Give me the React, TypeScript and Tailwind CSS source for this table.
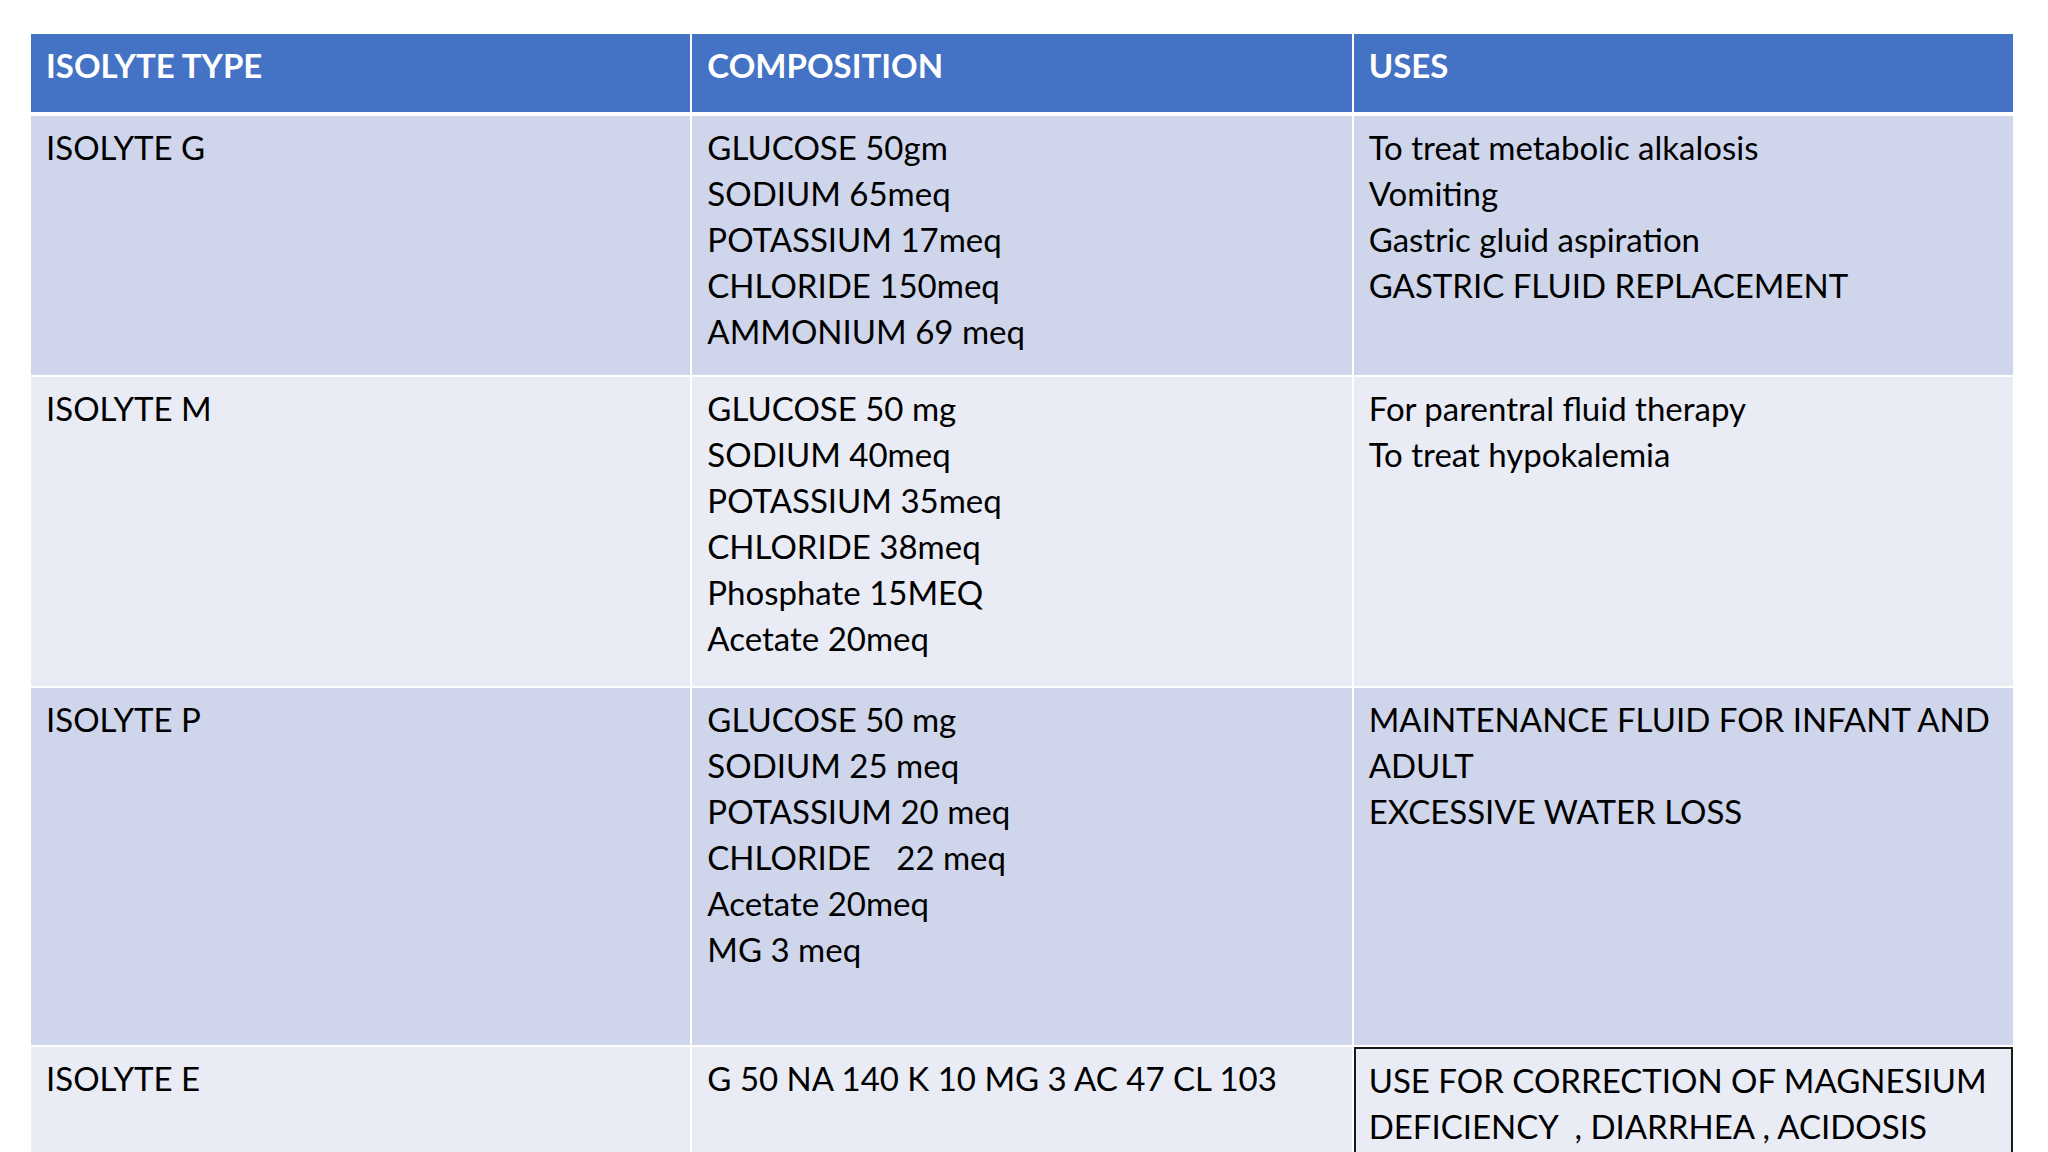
const rows = [
  {
    type: "ISOLYTE G",
    composition: ["GLUCOSE 50gm", "SODIUM 65meq", "POTASSIUM 17meq", "CHLORIDE 150meq", "AMMONIUM 69 meq"],
    uses: ["To treat metabolic alkalosis", "Vomiting", "Gastric gluid aspiration", "GASTRIC FLUID REPLACEMENT"],
    height: "h-[259px]",
    band: "bg-[#cfd5ea]",
  },
  {
    type: "ISOLYTE M",
    composition: ["GLUCOSE 50 mg", "SODIUM 40meq", "POTASSIUM 35meq", "CHLORIDE 38meq", "Phosphate 15MEQ", "Acetate 20meq"],
    uses: ["For parentral fluid therapy", "To treat hypokalemia"],
    height: "h-[309px]",
    band: "bg-[#e9ebf5]",
  },
  {
    type: "ISOLYTE P",
    composition: ["GLUCOSE 50 mg", "SODIUM 25 meq", "POTASSIUM 20 meq", "CHLORIDE\u00a0\u00a0\u00a022 meq", "Acetate 20meq", "MG 3 meq"],
    uses: ["MAINTENANCE FLUID FOR INFANT AND", "ADULT", "EXCESSIVE WATER LOSS"],
    height: "h-[357px]",
    band: "bg-[#cfd5ea]",
  },
  {
    type: "ISOLYTE E",
    composition: ["G 50 NA 140 K 10 MG 3 AC 47 CL 103"],
    uses: ["USE FOR CORRECTION OF MAGNESIUM", "DEFICIENCY\u00a0\u00a0, DIARRHEA , ACIDOSIS"],
    height: "h-[200px]",
    band: "bg-[#e9ebf5]",
  },
];

function Lines({ items }: { items: string[] }) {
  return (
    <>
      {items.map((line, i) => (
        <div key={i} className="whitespace-pre">{line}</div>
      ))}
    </>
  );
}

export default function App() {
  return (
    <div
      className="h-screen w-full overflow-hidden bg-white pl-[31px] pr-[35px] pt-[34px] text-[33px] leading-[46px] text-black"
      style={{ fontFamily: "Lato, 'Open Sans', sans-serif" }}
    >
      <div className="flex flex-col bg-white">
        {/* header */}
        <div className="grid grid-cols-3 gap-[2px] mb-[4px]">
          <div className="h-[78px] bg-[#4472c4] px-[15px] pt-[8px] font-bold text-white">ISOLYTE TYPE</div>
          <div className="h-[78px] bg-[#4472c4] px-[15px] pt-[8px] font-bold text-white">COMPOSITION</div>
          <div className="h-[78px] bg-[#4472c4] px-[15px] pt-[8px] font-bold text-white">USES</div>
        </div>

        {rows.map((row, i) => (
          <div key={row.type} className="grid grid-cols-3 gap-[2px] mb-[2px]">
            <div className={`${row.height} ${row.band} px-[15px] pt-[8px]`}>{row.type}</div>
            <div className={`${row.height} ${row.band} px-[15px] pt-[8px]`}>
              <Lines items={row.composition} />
            </div>
            <div
              className={`${row.height} ${row.band} px-[15px] pt-[8px] ${
                i === 3 ? "border-2 border-[#1a1a1a] pl-[13px] pt-[6px]" : ""
              }`}
            >
              <Lines items={row.uses} />
            </div>
          </div>
        ))}
      </div>
    </div>
  );
}
